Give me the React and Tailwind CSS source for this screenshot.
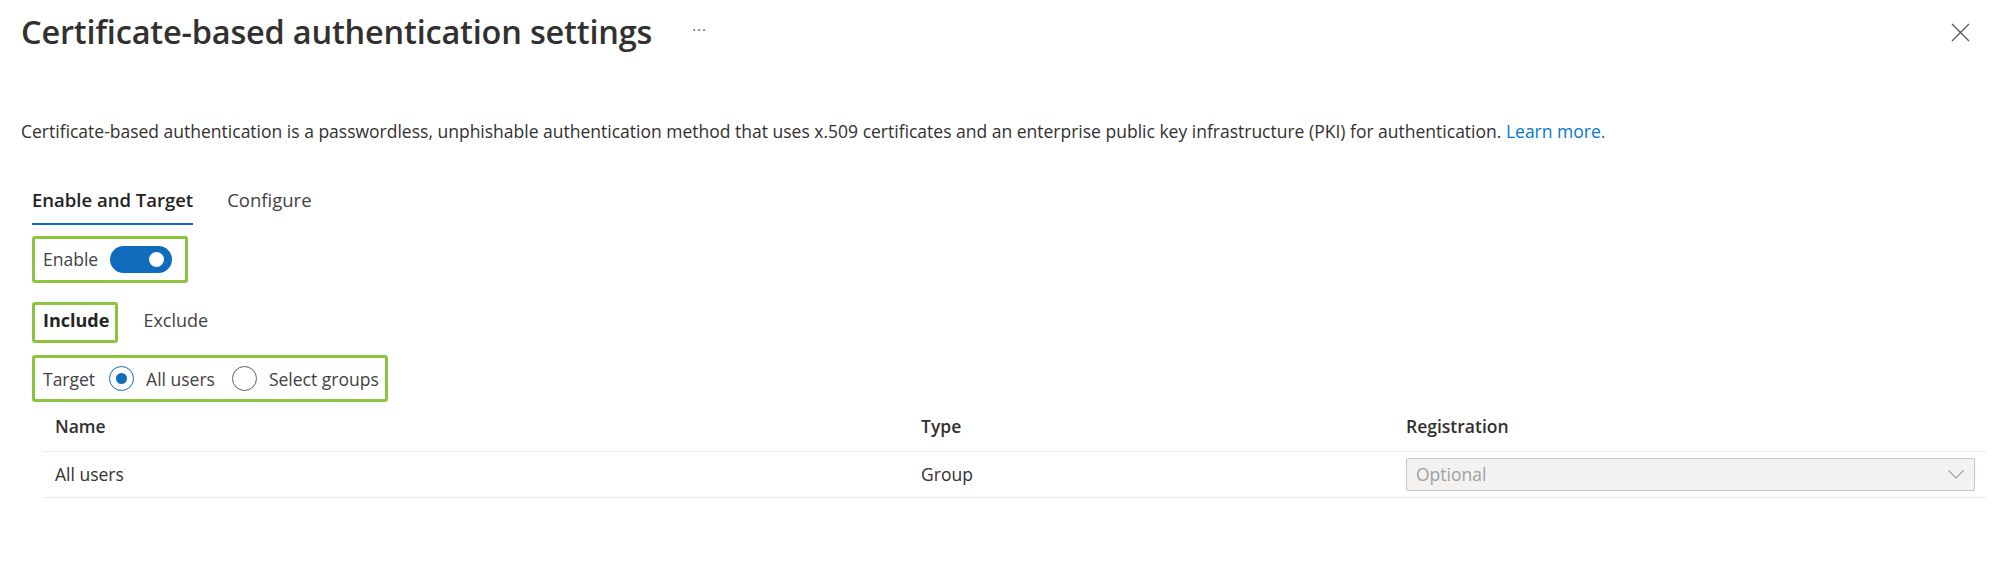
import React, { useState } from "react";

const Toggle = ({ on, onClick }) => (
  <button
    onClick={onClick}
    className={`flex items-center w-[62px] h-[27px] rounded-full px-[8px] ${
      on ? "bg-[#0f6cbd] justify-end" : "bg-white border border-[#605e5c] justify-start"
    }`}
  >
    <span className="block w-[15px] h-[15px] rounded-full bg-white" />
  </button>
);

const Radio = ({ checked, label, onClick }) => (
  <label className="flex items-center gap-[12px] cursor-pointer" onClick={onClick}>
    <span
      className={`flex items-center justify-center w-[25px] h-[25px] rounded-full border-[1.5px] ${
        checked ? "border-[#0f6cbd]" : "border-[#616161]"
      }`}
    >
      {checked && <span className="block w-[11px] h-[11px] rounded-full bg-[#0f6cbd]" />}
    </span>
    <span>{label}</span>
  </label>
);

const App = () => {
  const [enabled, setEnabled] = useState(true);
  const [tab, setTab] = useState("enable");
  const [scope, setScope] = useState("include");
  const [target, setTarget] = useState("all");

  return (
    <div
      className="min-h-[581px] bg-white text-[#323130] pl-[21px] pr-[13px]"
      style={{ fontFamily: '"Open Sans", "Noto Sans", sans-serif' }}
    >
      {/* Header */}
      <div className="flex items-center h-[40px] mt-[12px]">
        <h1 className="text-[32.5px] leading-[40px] font-semibold tracking-[-0.2px] text-[#323130]">
          Certificate-based authentication settings
        </h1>
        <span className="ml-[40px] text-[15px] text-[#605e5c] tracking-[1px] -mt-[6px]">···</span>
        <button className="ml-auto mr-[16px] w-[20px] h-[20px] flex items-center justify-center">
          <svg width="19" height="19" viewBox="0 0 19 19" fill="none">
            <path d="M1 1L18 18M18 1L1 18" stroke="#605e5c" strokeWidth="1.4" />
          </svg>
        </button>
      </div>

      {/* Description */}
      <p className="mt-[68px] text-[17.5px] leading-[22px] text-[#323130]">
        Certificate-based authentication is a passwordless, unphishable authentication method that uses x.509
        certificates and an enterprise public key infrastructure (PKI) for authentication.{" "}
        <a href="#" className="text-[#0078d4]">Learn more.</a>
      </p>

      {/* Tabs */}
      <div className="flex mt-[46px] ml-[11px] gap-[34px] text-[18.5px] leading-[24px]">
        <button
          onClick={() => setTab("enable")}
          className={`pb-[11px] border-b-2 ${
            tab === "enable" ? "border-[#0f6cbd] font-semibold text-[#242424]" : "border-transparent text-[#424242]"
          }`}
        >
          Enable and Target
        </button>
        <button
          onClick={() => setTab("configure")}
          className={`pb-[11px] border-b-2 ${
            tab === "configure" ? "border-[#0f6cbd] font-semibold text-[#242424]" : "border-transparent text-[#424242]"
          }`}
        >
          Configure
        </button>
      </div>

      {/* Enable */}
      <div className="mt-[11px] ml-[11px] inline-flex items-center gap-[12px] border-[3px] border-[#8cc63f] rounded-[3px] pl-[8px] pr-[13px] py-[7px] text-[17.5px] text-[#424242]">
        <span>Enable</span>
        <Toggle on={enabled} onClick={() => setEnabled(!enabled)} />
      </div>

      {/* Include / Exclude */}
      <div className="flex items-start mt-[19px] ml-[11px] text-[18px] leading-[24px]">
        <button
          onClick={() => setScope("include")}
          className={`border-[3px] rounded-[3px] pl-[8px] pr-[6px] pt-[3px] pb-[8px] ${
            scope === "include" ? "border-[#8cc63f] font-bold text-[#242424]" : "border-transparent text-[#424242]"
          }`}
        >
          Include
        </button>
        <button
          onClick={() => setScope("exclude")}
          className={`ml-[25px] pt-[6px] ${scope === "exclude" ? "font-bold text-[#242424]" : "text-[#424242]"}`}
        >
          Exclude
        </button>
      </div>

      {/* Target */}
      <div className="mt-[12px] ml-[11px] inline-flex items-center border-[3px] border-[#8cc63f] rounded-[3px] pl-[8px] pr-[6px] py-[8px] text-[17.5px] leading-[24px] text-[#424242]">
        <span className="mr-[14px]">Target</span>
        <Radio checked={target === "all"} label="All users" onClick={() => setTarget("all")} />
        <span className="w-[17px]" />
        <Radio checked={target === "groups"} label="Select groups" onClick={() => setTarget("groups")} />
      </div>

      {/* Table */}
      <div className="ml-[22px] text-[17.5px] text-[#323130]">
        <div className="grid grid-cols-[866px_485px_1fr] h-[50px] items-center border-b border-[#edebe9] font-semibold">
          <div className="pl-[12px]">Name</div>
          <div className="pl-[12px]">Type</div>
          <div className="pl-[12px]">Registration</div>
        </div>
        <div className="grid grid-cols-[866px_485px_1fr] h-[46px] items-center border-b border-[#edebe9]">
          <div className="pl-[12px]">All users</div>
          <div className="pl-[12px]">Group</div>
          <div className="pl-[12px] pr-[11px]">
            <div className="flex items-center justify-between h-[33px] bg-[#f3f2f1] border border-[#c8c6c4] rounded-[2px] pl-[9px] pr-[10px] text-[#a19f9d]">
              <span>Optional</span>
              <svg width="16" height="9" viewBox="0 0 16 9" fill="none">
                <path d="M0.5 0.5L8 8L15.5 0.5" stroke="#a19f9d" strokeWidth="1.2" />
              </svg>
            </div>
          </div>
        </div>
      </div>
    </div>
  );
};

export default App;
